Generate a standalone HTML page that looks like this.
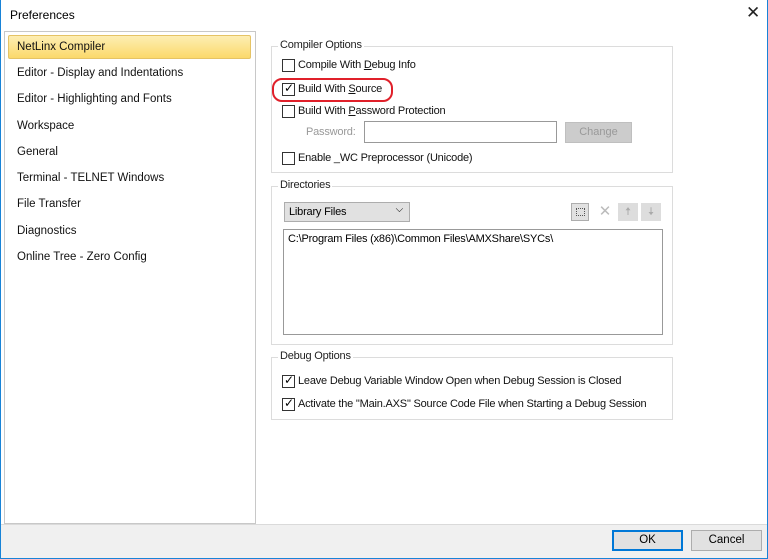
<!DOCTYPE html>
<html><head><style>
*{box-sizing:border-box;margin:0;padding:0}
body{width:768px;height:559px;position:relative;background:#fff;font-family:"Liberation Sans",sans-serif;font-size:11px;color:#000;overflow:hidden;border:1px solid #1883d7;border-top:none}
.a{position:absolute}
.item{position:absolute;left:16px;font-size:11.5px;color:#111}
.grp{position:absolute;border:1px solid #dcdcdc;left:270px;width:402px}
.lg{position:absolute;top:-8px;left:6px;background:#fff;padding:0 2px;color:#222;letter-spacing:-0.2px}
.cb{position:absolute;width:13px;height:13px;border:1px solid #333;background:#fff}
.lbl{position:absolute;color:#111;letter-spacing:-0.2px}
.btn{position:absolute;height:21px;border:1px solid #adadad;background:#e1e1e1;text-align:center;line-height:19px}
.ck{position:absolute;font-size:12px}
</style></head><body>
<div class="a" style="left:9px;top:8px;font-size:12px">Preferences</div>
<div class="a" style="left:745px;top:3px;font-size:17px;color:#222">✕</div>
<div class="a" style="left:3px;top:31px;width:252px;height:493px;border:1px solid #c8c8c8;background:#fff"></div>
<div class="a" style="left:7px;top:35px;width:243px;height:24px;border:1px solid #e5c365;border-radius:2px;background:linear-gradient(#fdeeb3,#fbd96b)"></div>
<div class="item" style="top:41px">NetLinx Compiler</div>
<div class="item" style="top:67px">Editor - Display and Indentations</div>
<div class="item" style="top:93px">Editor - Highlighting and Fonts</div>
<div class="item" style="top:120px">Workspace</div>
<div class="item" style="top:146px">General</div>
<div class="item" style="top:172px">Terminal - TELNET Windows</div>
<div class="item" style="top:198px">File Transfer</div>
<div class="item" style="top:225px">Diagnostics</div>
<div class="item" style="top:251px">Online Tree - Zero Config</div>

<div class="grp" style="top:46px;height:127px"><div class="lg">Compiler Options</div></div>
<div class="cb" style="left:281px;top:59px"></div><div class="lbl" style="left:297px;top:59px">Compile With <u>D</u>ebug Info</div>
<div class="cb" style="left:281px;top:83px"></div><div class="ck" style="left:283px;top:81px">✓</div><div class="lbl" style="left:297px;top:83px">Build With <u>S</u>ource</div>
<div class="a" style="left:271px;top:78px;width:121px;height:24px;border:2px solid #e0202a;border-radius:10px"></div>
<div class="cb" style="left:281px;top:105px"></div><div class="lbl" style="left:297px;top:105px">Build With <u>P</u>assword Protection</div>
<div class="lbl" style="left:305px;top:126px;color:#999">Password:</div>
<div class="a" style="left:363px;top:121px;width:193px;height:22px;border:1px solid #999"></div>
<div class="btn" style="left:564px;top:122px;width:67px;color:#999;background:#ccc;border-color:#bfbfbf">Change</div>
<div class="cb" style="left:281px;top:152px"></div><div class="lbl" style="left:297px;top:152px">Enable _WC Preprocessor (Unicode)</div>

<div class="grp" style="top:186px;height:159px"><div class="lg">Directories</div></div>
<div class="a" style="left:283px;top:202px;width:126px;height:20px;border:1px solid #adadad;background:#e1e1e1;padding:3px 4px;letter-spacing:-0.2px">Library Files<span style="position:absolute;right:6px;top:1px;font-size:10px">⌵</span></div>
<div class="a" style="left:570px;top:203px;width:18px;height:18px;border:1px solid #adadad;background:#e1e1e1"><div style="margin:4px;width:9px;height:8px;border:1px dotted #555"></div></div>
<div class="a" style="left:594px;top:203px;width:20px;height:18px;color:#bbb;font-size:15px;text-align:center;line-height:18px">✕</div>
<div class="a" style="left:617px;top:203px;width:20px;height:18px;background:#ddd;color:#aaa;text-align:center;line-height:18px">🠅</div>
<div class="a" style="left:640px;top:203px;width:20px;height:18px;background:#ddd;color:#aaa;text-align:center;line-height:18px">🠇</div>
<div class="a" style="left:282px;top:229px;width:380px;height:106px;border:1px solid #999;padding:3px 4px;letter-spacing:-0.2px">C:\Program Files (x86)\Common Files\AMXShare\SYCs\</div>

<div class="grp" style="top:357px;height:63px"><div class="lg">Debug Options</div></div>
<div class="cb" style="left:281px;top:375px"></div><div class="ck" style="left:283px;top:373px">✓</div><div class="lbl" style="left:297px;top:375px">Leave Debug Variable Window Open when Debug Session is Closed</div>
<div class="cb" style="left:281px;top:398px"></div><div class="ck" style="left:283px;top:396px">✓</div><div class="lbl" style="left:297px;top:398px">Activate the "Main.AXS" Source Code File when Starting a Debug Session</div>

<div class="a" style="left:0;top:524px;width:766px;height:34px;background:#f0f0f0;border-top:1px solid #dadada"></div>
<div class="btn" style="left:611px;top:530px;width:71px;border:2px solid #0078d7;line-height:17px;font-size:11.5px">OK</div>
<div class="btn" style="left:690px;top:530px;width:71px;font-size:11.5px">Cancel</div>
</body></html>
